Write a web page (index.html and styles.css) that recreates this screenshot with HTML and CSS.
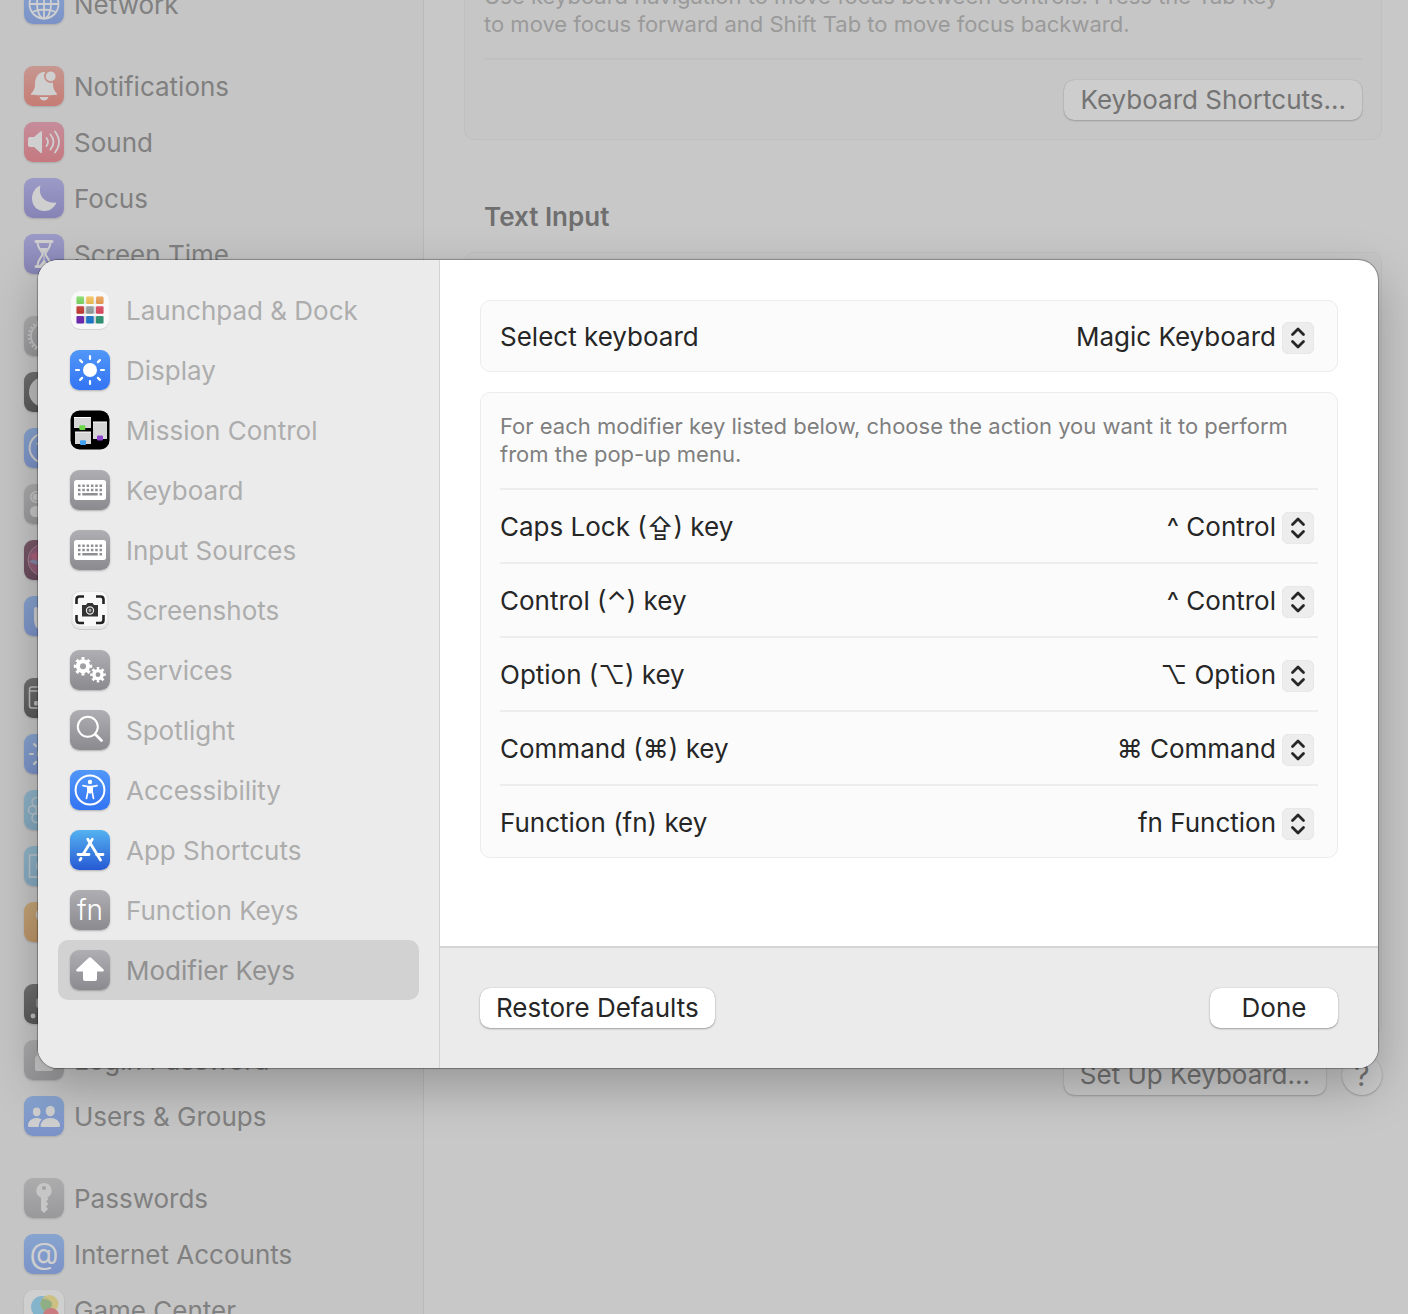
FILE: index.html
```html
<!DOCTYPE html>
<html lang="en">
<head>
  <meta charset="UTF-8">
  <meta name="viewport" content="width=device-width, initial-scale=1.0">
  <title>Keyboard</title>
  <link rel="stylesheet" href="styles.css">
</head>
<body>

<!-- Shared icons -->
<svg class="sprite" aria-hidden="true">
  <symbol id="i-gear" viewBox="0 0 40 40">
    <g fill="none" stroke="currentColor">
      <circle cx="20" cy="20" r="13" stroke-width="1.6"/>
      <circle cx="20" cy="20" r="15" stroke-width="2.4" pathLength="48" stroke-dasharray="1 1"/>
      <path d="M20 20 31 20M20 20 14 9M20 20 14 31" stroke-width="1.4"/>
    </g>
  </symbol>
  <symbol id="i-access" viewBox="0 0 40 40">
    <circle cx="20" cy="20" r="14.4" fill="none" stroke="currentColor" stroke-width="2"/>
    <circle cx="20" cy="12" r="2.2" fill="currentColor"/>
    <path d="M13 15.6 18 16.6V21L16.500 28.4M27 15.6 22 16.6V21L23.500 28.4" fill="none" stroke="currentColor" stroke-width="1.7" stroke-linecap="round"/>
    <path d="M17.2 15.8h5.6v6.4l-2.8 1.6-2.8-1.6z" fill="currentColor"/>
  </symbol>
  <symbol id="i-sun" viewBox="0 0 40 40">
    <circle cx="20" cy="20" r="7" fill="currentColor"/>
    <path d="M20 6v3M20 31v3M6 20h3M31 20h3M10.100 10.100l2 2M27.900 27.900l2 2M10.100 29.900l2-2M27.900 12.100l2-2" stroke="currentColor" stroke-width="2.200" stroke-linecap="round"/>
  </symbol>
  <symbol id="i-keyboard" viewBox="0 0 40 40">
    <rect x="4" y="10" width="32" height="20" rx="2.500" fill="#fff"/>
    <g stroke="#8f8e93" stroke-width="2.500">
      <path d="M8 15.700h24" stroke-dasharray="2.500 1.800"/>
      <path d="M8 20h24" stroke-dasharray="2.500 1.800"/>
      <path d="M8 24.300h2.500M12.300 24.300h15.400M29.500 24.300H32"/>
    </g>
  </symbol>
  <symbol id="i-chevrons" viewBox="0 0 32 32">
    <path d="M10.500 12.500 16 7l5.500 5.500M10.500 19.500 16 25l5.500-5.500" fill="none" stroke="#262626" stroke-width="2.800" stroke-linecap="round" stroke-linejoin="round"/>
  </symbol>
</svg>

<div class="settings">
  <nav class="sidebar" aria-label="Settings">
    <ul class="group">
      <li><a href="#"><svg class="icon blue" viewBox="0 0 40 40"><g fill="none" stroke="currentColor" stroke-width="1.800"><circle cx="20" cy="20" r="14.500"/><ellipse cx="20" cy="20" rx="7" ry="14.500"/><path d="M20 5v30M5.500 20h29M8 12q12 5 24 0M8 28q12-5 24 0"/></g></svg>Network</a></li>
    </ul>
    <ul class="group">
      <li><a href="#"><svg class="icon red" viewBox="0 0 40 40"><path d="M7 28.500C7 26 11 25.500 11 18c0-7 3.500-12 9-12 3 0 9 4 9 12 0 7.500 4 8 4 10.500 0 1-26 1-26 0zM15.500 31h9c-1 4.500-8 4.500-9 0z" fill="currentColor"/><circle cx="26.700" cy="10.300" r="5.800" fill="currentColor" stroke="#c69089" stroke-width="1.800"/></svg>Notifications</a></li>
      <li><a href="#"><svg class="icon pink" viewBox="0 0 40 40"><path d="M4 17q0-2 2-2h4l6.500-5.500q1.500-.8 1.500.8v20q0 1.500-1.500.5L10 25H6q-2 0-2-2z" fill="currentColor"/><path d="M22.500 16q3 4 0 8M26.500 12.500q6 7.500 0 15M31 9.500q8 10.500 0 21" fill="none" stroke="currentColor" stroke-width="1.800" stroke-linecap="round"/></svg>Sound</a></li>
      <li><a href="#"><svg class="icon purple" viewBox="0 0 40 40"><path d="M16.500 7.500C14 16 19 26 32.500 24.500 30 30 26 33 20.500 33 13 33 8 27.500 8 20.500 8 14 12 9 16.500 7.500z" fill="currentColor"/></svg>Focus</a></li>
      <li><a href="#"><svg class="icon purple" viewBox="0 0 40 40"><path d="M12 7.500h16M12 32.500h16" stroke="currentColor" stroke-width="3" stroke-linecap="round"/><path d="M13.500 8c0 7 5 9 5 12s-5 5-5 12M26.500 8c0 7-5 9-5 12s5 5 5 12" fill="none" stroke="currentColor" stroke-width="2"/><path d="M16 14h8l-3.500 5v7l4.500 6h-10l4.500-6v-7z" fill="currentColor"/></svg>Screen Time</a></li>
    </ul>
    <ul class="group">
      <li><a href="#" aria-label="General"><svg class="icon gray"><use href="#i-gear"/></svg></a></li>
      <li><a href="#" aria-label="Appearance"><svg class="icon dark" viewBox="0 0 40 40"><circle cx="20" cy="20" r="15" fill="currentColor"/><path d="M20 10a10 10 0 0 1 0 20z" fill="#666"/></svg></a></li>
      <li><a href="#" aria-label="Accessibility"><svg class="icon blue"><use href="#i-access"/></svg></a></li>
      <li><a href="#" aria-label="Control Center"><svg class="icon gray" viewBox="0 0 40 40"><rect x="6" y="22" width="28" height="11" rx="5.500" fill="currentColor"/><rect x="6.800" y="7.800" width="26.400" height="10.400" rx="5.200" fill="none" stroke="currentColor" stroke-width="1.600"/><circle cx="12" cy="13" r="3.300" fill="currentColor"/></svg></a></li>
      <li><a href="#" aria-label="Siri"><svg class="icon siri" viewBox="0 0 40 40"><circle cx="20" cy="20" r="16" fill="#8f5d76" stroke="#a08494" stroke-width="1"/><path d="M5 22q9-8 28 0-10 7-28 0z" fill="#8487a5"/><path d="M6 16q8-9 14 3-7 5-14-3z" fill="#a8607a"/></svg></a></li>
      <li><a href="#" aria-label="Privacy"><svg class="icon blue" viewBox="0 0 40 40"><path d="M12 13v10q0 10 9 10t9-10V9M16 11v10M21 8v13M26 9v12" fill="none" stroke="currentColor" stroke-width="4" stroke-linecap="round"/></svg></a></li>
    </ul>
    <ul class="group">
      <li><a href="#" aria-label="Desktop"><svg class="icon dark" viewBox="0 0 40 40"><rect x="5.500" y="9" width="29" height="21" rx="2.500" fill="none" stroke="currentColor" stroke-width="1.600"/><path d="M6 13h28" stroke="currentColor" stroke-width="1.600"/><rect x="10" y="23" width="20" height="4.500" rx="1.500" fill="currentColor"/></svg></a></li>
      <li><a href="#" aria-label="Displays"><svg class="icon blue"><use href="#i-sun"/></svg></a></li>
      <li><a href="#" aria-label="Wallpaper"><svg class="icon cyan" viewBox="0 0 40 40"><g fill="none" stroke="currentColor" stroke-width="1.500"><circle cx="12.500" cy="12" r="4.500"/><circle cx="8.500" cy="20" r="4"/><circle cx="12.500" cy="28" r="4.500"/><circle cx="21" cy="9" r="4.500"/><circle cx="21" cy="31" r="4.500"/><circle cx="28" cy="15" r="4.500"/><circle cx="28" cy="25" r="4.500"/></g></svg></a></li>
      <li><a href="#" aria-label="Screen Saver"><svg class="icon cyan" viewBox="0 0 40 40"><rect x="5.500" y="9" width="29" height="22" fill="none" stroke="currentColor" stroke-width="1.600"/><circle cx="18" cy="20" r="6" fill="currentColor"/></svg></a></li>
      <li><a href="#" aria-label="Energy"><svg class="icon orange" viewBox="0 0 40 40"><path d="M12 13a8 8 0 1 1 16 0c0 5-4 6-4 11h-8c0-5-4-6-4-11zM16 26h8v5h-8z" fill="currentColor"/></svg></a></li>
    </ul>
    <ul class="group">
      <li><a href="#" aria-label="Lock Screen"><svg class="icon dark" viewBox="0 0 40 40"><rect x="12.500" y="14" width="15" height="10" rx="2" fill="currentColor"/><circle cx="9" cy="32" r="2.400" fill="currentColor"/><circle cx="16.500" cy="32" r="2.400" fill="currentColor"/><circle cx="24" cy="32" r="2.400" fill="currentColor"/><circle cx="31" cy="32" r="2.400" fill="currentColor"/></svg></a></li>
      <li><a href="#"><svg class="icon gray" viewBox="0 0 40 40"><rect x="11" y="16" width="18" height="15" rx="2" fill="currentColor"/><path d="M14.500 17v-4a5.500 5.500 0 0 1 11 0v4" fill="none" stroke="currentColor" stroke-width="2.400"/></svg>Login Password</a></li>
      <li><a href="#"><svg class="icon blue" viewBox="0 0 40 40"><g fill="currentColor"><ellipse cx="12.700" cy="15.800" rx="3.800" ry="4.400"/><ellipse cx="26.300" cy="15" rx="4.600" ry="5.200"/><path d="M4 29.500C4 25 8 22 12.500 22c2 0 4 .6 5.200 1.600-2 1.900-2.900 4.400-2.900 7.400H5.500Q4 31 4 29.500zM16.500 29.500C17 25 21 22 26.300 22S36 25 36 29.500q0 1.500-1.500 1.500H18q-1.500 0-1.500-1.500z"/></g></svg>Users &amp; Groups</a></li>
    </ul>
    <ul class="group">
      <li><a href="#"><svg class="icon gray" viewBox="0 0 40 40"><path d="M20 5a7.700 7.700 0 0 0-3 14.800V32l3 3 4-4-2-2.500 2.500-2.500L22 23.500l2.500-2.500-1.200-1.400A7.700 7.700 0 0 0 20 5z" fill="currentColor"/><circle cx="20" cy="10" r="2" fill="#a2a2a3"/></svg>Passwords</a></li>
      <li><a href="#"><svg class="icon blue" viewBox="0 0 40 40"><text class="at-sign" x="20" y="30" text-anchor="middle">@</text></svg>Internet Accounts</a></li>
      <li><a href="#"><svg class="icon light" viewBox="0 0 40 40"><circle cx="18" cy="17" r="11" fill="#84b3cc"/><circle cx="25.500" cy="14" r="9" fill="#cdbd75" fill-opacity=".85"/><path d="M18 9a9 9 0 0 0 4 13 11 11 0 0 0 6-9 11 11 0 0 0-10-4z" fill="#8fae85"/><circle cx="27" cy="26" r="8" fill="#c97b80"/></svg>Game Center</a></li>
    </ul>
  </nav>

  <main class="content">
    <section class="panel panel-navigation">
      <p class="note">Use keyboard navigation to move focus between controls. Press the Tab key to move focus forward and Shift Tab to move focus backward.</p>
      <div class="panel-actions">
        <button type="button" class="btn">Keyboard Shortcuts...</button>
      </div>
    </section>
    <h2>Text Input</h2>
    <section class="panel panel-input"></section>
    <div class="content-actions">
      <button type="button" class="btn">Set Up Keyboard...</button>
      <button type="button" class="btn btn-help" aria-label="Help">?</button>
    </div>
  </main>
</div>

<!-- Keyboard shortcuts dialog -->
<div class="dialog" role="dialog" aria-label="Keyboard Shortcuts">
  <nav class="dialog-nav" aria-label="Shortcut categories">
    <ul>
      <li><a href="#"><svg class="icon" viewBox="0 0 40 40">
        <defs>
          <linearGradient id="lp-fade" x2="0" y2="1"><stop stop-color="#fff" stop-opacity=".3"/><stop offset="1" stop-opacity=".16"/></linearGradient>
        </defs>
        <rect x="1" y="1" width="38" height="39" rx="9" fill="#d2d2d2"/>
        <rect x="1" y="1" width="38" height="38" rx="9" fill="#f8f8f8"/>
        <rect x="6.500" y="6.500" width="7.500" height="7.500" rx="1.200" fill="#5fd23e"/><rect x="16.200" y="6.500" width="7.500" height="7.500" rx="1.200" fill="#f3b32d"/><rect x="26" y="6.500" width="7.500" height="7.500" rx="1.200" fill="#e8882b"/>
        <rect x="6.500" y="16.200" width="7.500" height="7.500" rx="1.200" fill="#d22f25"/><rect x="16.200" y="16.200" width="7.500" height="7.500" rx="1.200" fill="#9aa3a6"/><rect x="26" y="16.200" width="7.500" height="7.500" rx="1.200" fill="#ef3e5b"/>
        <rect x="6.500" y="26" width="7.500" height="7.500" rx="1.200" fill="#7c2bc9"/><rect x="16.200" y="26" width="7.500" height="7.500" rx="1.200" fill="#1d86ea"/><rect x="26" y="26" width="7.500" height="7.500" rx="1.200" fill="#35a883"/>
        <path d="M6.500 6.500h27V14h-27zM6.500 16.200h27v7.500h-27zM6.500 26h27v7.500h-27z" fill="url(#lp-fade)"/>
      </svg>Launchpad &amp; Dock</a></li>
      <li><a href="#"><svg class="icon blue"><use href="#i-sun"/></svg>Display</a></li>
      <li><a href="#"><svg class="icon" viewBox="0 0 40 40">
        <rect x="0.500" y="0.500" width="39" height="39" rx="9" fill="#000"/>
        <g fill="#d6d6d6"><rect x="4" y="7.500" width="17" height="10.500"/><rect x="23" y="12" width="14" height="17"/><rect x="5" y="22" width="16" height="12"/></g>
        <path d="M4 7.500h17M23 12h14M5 22h16" stroke="#fff"/>
        <rect x="9.300" y="15.300" width="6" height="4.700" rx="1" fill="#6bd84a"/><rect x="27" y="25.500" width="6" height="5" rx="1" fill="#8f46d0"/><rect x="10" y="30.300" width="6" height="4.700" rx="1" fill="#45a2f2"/>
      </svg>Mission Control</a></li>
      <li><a href="#"><svg class="icon gray"><use href="#i-keyboard"/></svg>Keyboard</a></li>
      <li><a href="#"><svg class="icon gray"><use href="#i-keyboard"/></svg>Input Sources</a></li>
      <li><a href="#"><svg class="icon" viewBox="0 0 40 40">
        <rect x="1" y="1" width="38" height="39" rx="9" fill="#cacaca"/>
        <rect x="1" y="1" width="38" height="38" rx="9" fill="#e6e6e6"/>
        <rect x="3" y="2" width="34" height="34" rx="7" fill="#f8f8f8"/>
        <path d="M6.500 14V9.500q0-3 3-3H14M26 6.500h4.500q3 0 3 3V14M33.500 25v5q0 3-3 3H26M14 33H9.500q-3 0-3-3v-5" fill="none" stroke="#222" stroke-width="2.600"/>
        <path d="M12 15h4l1.500-2h5l1.500 2h4v11.500H12z" fill="#333"/>
        <circle cx="20" cy="20.500" r="3.600" fill="#444" stroke="#e6e6e6" stroke-width="1.200"/><circle cx="20" cy="20.500" r="1.400" fill="#aaa"/>
      </svg>Screenshots</a></li>
      <li><a href="#"><svg class="icon gray" viewBox="0 0 40 40"><g fill="none" stroke="#fff">
        <circle cx="13" cy="16.300" r="5" stroke-width="4"/><circle cx="13" cy="16.300" r="7.600" stroke-width="3.200" pathLength="16" stroke-dasharray="1 1" stroke-dashoffset=".5"/>
        <circle cx="28" cy="24.700" r="4.100" stroke-width="3.400"/><circle cx="28" cy="24.700" r="6.400" stroke-width="2.800" pathLength="16" stroke-dasharray="1 1" stroke-dashoffset=".5"/>
      </g></svg>Services</a></li>
      <li><a href="#"><svg class="icon gray" viewBox="0 0 40 40"><g fill="none" stroke="#fff" stroke-linecap="round"><circle cx="17.800" cy="16.800" r="10" stroke-width="2"/><path d="m25.500 24.500 6 6" stroke-width="2.800"/></g></svg>Spotlight</a></li>
      <li><a href="#"><svg class="icon blue"><use href="#i-access"/></svg>Accessibility</a></li>
      <li><a href="#"><svg class="icon store" viewBox="0 0 40 40"><path d="M17.800 9.300 30.500 30M22.300 9.300 13.300 24M8 24.500h11M26.500 24.500H33M11 28.500l-1 1.500" fill="none" stroke="#fff" stroke-width="2.800" stroke-linecap="round"/></svg>App Shortcuts</a></li>
      <li><a href="#"><svg class="icon gray" viewBox="0 0 40 40"><text class="fn-mark" x="20" y="30" text-anchor="middle">fn</text></svg>Function Keys</a></li>
      <li><a href="#" class="selected" aria-current="true"><svg class="icon gray" viewBox="0 0 40 40"><path d="M18.800 7.800q1.200-1.200 2.400 0L33.600 19.600q1 1.400-.6 1.900H27V29q0 2-2 2H15q-2 0-2-2v-7.500H7q-1.600-.5-.6-1.900z" fill="#fff"/></svg>Modifier Keys</a></li>
    </ul>
  </nav>

  <form class="dialog-main">
    <div class="dialog-body">
      <div class="card">
        <div class="row">
          <label for="keyboard">Select keyboard</label>
          <span class="picker"><select id="keyboard"><option>Magic Keyboard</option></select><svg><use href="#i-chevrons"/></svg></span>
        </div>
      </div>

      <div class="card">
        <p class="note">For each modifier key listed below, choose the action you want it to perform from the pop-up menu.</p>
        <div class="row">
          <label for="caps">Caps Lock (⇪) key</label>
          <span class="picker"><select id="caps"><option>^ Control</option></select><svg><use href="#i-chevrons"/></svg></span>
        </div>
        <div class="row">
          <label for="control">Control (⌃) key</label>
          <span class="picker"><select id="control"><option>^ Control</option></select><svg><use href="#i-chevrons"/></svg></span>
        </div>
        <div class="row">
          <label for="option">Option (⌥) key</label>
          <span class="picker"><select id="option"><option>⌥ Option</option></select><svg><use href="#i-chevrons"/></svg></span>
        </div>
        <div class="row">
          <label for="command">Command (⌘) key</label>
          <span class="picker"><select id="command"><option>⌘ Command</option></select><svg><use href="#i-chevrons"/></svg></span>
        </div>
        <div class="row">
          <label for="function">Function (fn) key</label>
          <span class="picker"><select id="function"><option>fn Function</option></select><svg><use href="#i-chevrons"/></svg></span>
        </div>
      </div>
    </div>
    <div class="dialog-footer">
      <button type="button" class="btn">Restore Defaults</button>
      <button type="button" class="btn btn-done">Done</button>
    </div>
  </form>
</div>

</body>
</html>
```
FILE: styles.css
```css
* {
  margin: 0;
  padding: 0;
  box-sizing: border-box;
}

body {
  height: 100vh;
  overflow: hidden;
  position: relative;
  background: #c8c8c8;
  color: #262626;
  font-family: Inter, "DejaVu Sans", sans-serif;
  font-size: 26px;
  line-height: 32px;
}

ul {
  list-style: none;
}

a {
  color: inherit;
  text-decoration: none;
}

button,
select {
  font: inherit;
  color: inherit;
}

.sprite {
  position: absolute;
  width: 0;
  height: 0;
}

/* Icons */
.icon {
  width: 40px;
  height: 40px;
  flex-shrink: 0;
  margin-top: -2px;
  border-radius: 9px;
  color: #fff;
}

.gray { background: linear-gradient(#afaeb3, #8b8a8f); }
.blue { background: linear-gradient(#5197f8, #3274f3); }
.store { background: linear-gradient(#55b2f0, #2659d4); }

.dialog .gray,
.dialog .blue,
.dialog .store {
  box-shadow: 0 1px 2px rgba(0, 0, 0, 0.25);
}

.at-sign {
  font-size: 30px;
  fill: currentColor;
}

.fn-mark {
  font-size: 28px;
  font-weight: 300;
  fill: currentColor;
}

/* Window behind the dialog */
.settings {
  display: flex;
  min-height: 100%;
}

.sidebar {
  width: 424px;
  flex-shrink: 0;
  margin-top: -24px;
  padding-left: 24px;
  background: #c5c5c5;
  border-right: 1px solid #b9b9b9;
  color: #808080;
}

.group {
  margin-bottom: 26px;
}

.sidebar a {
  display: flex;
  align-items: center;
  gap: 10px;
  height: 56px;
  padding-top: 2px;
}

.sidebar .icon {
  color: #cfcfcf;
  box-shadow: 0 1px 2px rgba(0, 0, 0, 0.15);
}

.sidebar .blue { background: linear-gradient(#87a4cf, #7b92c8); }
.sidebar .red { background: linear-gradient(#c69790, #c67c74); }
.sidebar .pink { background: linear-gradient(#c68d9b, #c5797f); }
.sidebar .purple { background: linear-gradient(#9c9ac6, #8684b6); }
.sidebar .gray { background: linear-gradient(#adadae, #99999b); color: #c6c6c6; }
.sidebar .dark { background: linear-gradient(#717171, #595959); color: #bcbcbc; }
.sidebar .cyan { background: linear-gradient(#8fb4c8, #84a9bf); color: #b9c4ca; }
.sidebar .orange { background: linear-gradient(#c4a578, #bd9468); }
.sidebar .siri { background: linear-gradient(#7a5a68, #694b5e); }
.sidebar .light { background: #cfcfcf; }

.content {
  flex: 1;
  padding: 0 26px 0 40px;
}

.content h2 {
  margin: 61px 20px 19px;
  font-size: 26px;
  line-height: 32px;
  font-weight: 600;
  color: #6f6f6f;
}

.panel {
  background: #c6c6c6;
  border: 1px solid #c0c0c0;
  border-radius: 10px;
}

.panel-navigation {
  margin-top: -40px;
  padding: 21px 19px 19px;
}

.panel-input {
  min-height: 783px;
}

.note {
  max-width: 800px;
  font-size: 22px;
  line-height: 28px;
}

.panel .note {
  color: #9a9a9a;
}

.panel-actions,
.content-actions {
  display: flex;
  justify-content: flex-end;
  gap: 16px;
  padding-top: 20px;
}

.panel-actions {
  margin-top: 20px;
  border-top: 2px solid #c0c0c0;
}

.btn {
  height: 40px;
  padding: 0 16px;
  border: none;
  border-radius: 10px;
  background: #fff;
  line-height: 38px;
  white-space: nowrap;
  box-shadow: 0 0 1px rgba(0, 0, 0, 0.3), 0 1px 2px rgba(0, 0, 0, 0.3);
}

.content .btn {
  background: #cdcdcd;
  color: #747474;
  box-shadow: 0 0 1px rgba(0, 0, 0, 0.2), 0 1px 2px rgba(0, 0, 0, 0.2);
}

.content .btn-help {
  width: 40px;
  padding: 0;
  border-radius: 50%;
  font-size: 30px;
}

/* Dialog */
.dialog {
  position: absolute;
  top: 260px;
  left: 38px;
  right: 30px;
  display: flex;
  overflow: hidden;
  border-radius: 20px;
  background: #fff;
  box-shadow: 0 0 1px 1px rgba(0, 0, 0, 0.3), 0 18px 50px rgba(0, 0, 0, 0.26);
}

.dialog-nav {
  width: 402px;
  flex-shrink: 0;
  padding: 20px;
  background: #ebebeb;
  border-right: 1px solid #d2d2d2;
  color: #adadad;
}

.dialog-nav a {
  display: flex;
  align-items: center;
  gap: 16px;
  height: 60px;
  padding: 2px 12px 0;
  border-radius: 10px;
}

.dialog-nav .selected {
  background: #d2d2d2;
  color: #919191;
}

.dialog-main {
  flex: 1;
  display: flex;
  flex-direction: column;
}

.dialog-body {
  flex: 1;
  display: flex;
  flex-direction: column;
  gap: 20px;
  padding: 40px 40px 88px;
}

.card {
  padding: 0 19px;
  background: #fbfbfb;
  border: 1px solid #ececec;
  border-radius: 10px;
}

.card .note {
  padding: 19px 0 20px;
  color: #7f7f7f;
}

.row {
  display: flex;
  align-items: center;
  justify-content: space-between;
  height: 70px;
  padding: 2px 4px 0 0;
}

.note ~ .row {
  height: 74px;
  border-top: 2px solid #ededed;
}

.note ~ .row:last-child {
  height: 73px;
}

.picker {
  position: relative;
  display: flex;
}

.picker select {
  appearance: none;
  height: 32px;
  padding-right: 38px;
  border: none;
  background: none;
  text-align-last: right;
}

.picker svg {
  position: absolute;
  right: 0;
  top: 1px;
  width: 32px;
  height: 32px;
  border-radius: 7px;
  background: #ededed;
  box-shadow: inset 0 0 1px rgba(0, 0, 0, 0.2);
  pointer-events: none;
}

.dialog-footer {
  display: flex;
  justify-content: space-between;
  padding: 40px;
  background: #ebebeb;
  border-top: 2px solid #d5d5d5;
}

.btn-done {
  min-width: 128px;
}
```
